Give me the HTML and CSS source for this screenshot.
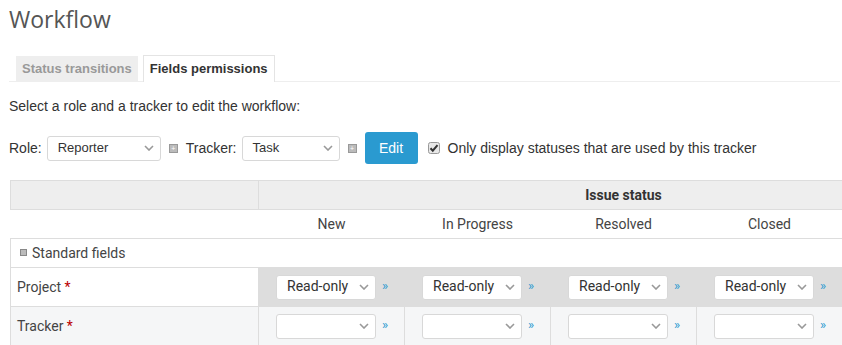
FILE: index.html
```html
<!DOCTYPE html>
<html>
<head>
<meta charset="utf-8">
<link rel="stylesheet" href="styles.css">
</head>
<body>
<div class="page">
  <h2 class="title">Workflow</h2>
  <div class="tabs">
    <a class="tab">Status transitions</a>
    <a class="tab active">Fields permissions</a>
  </div>
  <p class="intro">Select a role and a tracker to edit the workflow:</p>
  <div class="filters">
    <label class="lbl">Role:</label>
    <div class="select sel-role"><span>Reporter</span><svg class="chev" viewBox="0 0 10 6"><path d="M1 1l4 4 4-4" fill="none" stroke="#999" stroke-width="1.6"/></svg></div>
    <span class="plus">+</span>
    <label class="lbl">Tracker:</label>
    <div class="select sel-tracker"><span>Task</span><svg class="chev" viewBox="0 0 10 6"><path d="M1 1l4 4 4-4" fill="none" stroke="#999" stroke-width="1.6"/></svg></div>
    <span class="plus">+</span>
    <button class="btn">Edit</button>
    <span class="check"><svg viewBox="0 0 12 12"><rect x="0.5" y="0.5" width="11" height="11" rx="2" fill="#e8e8e8" stroke="#999"/><path d="M2.5 6.2l2.3 2.5 4.7-5.5" fill="none" stroke="#333" stroke-width="2"/></svg></span>
    <span class="checklabel">Only display statuses that are used by this tracker</span>
  </div>
  <div class="tablewrap">
    <table class="wf">
      <colgroup>
        <col class="c-first"><col class="c-st"><col class="c-st"><col class="c-st"><col class="c-st"><col class="c-st">
      </colgroup>
      <tr class="r-group">
        <th></th>
        <th colspan="5" class="group">Issue status</th>
      </tr>
      <tr class="r-names">
        <td></td>
        <td>New</td><td>In Progress</td><td>Resolved</td><td>Closed</td><td>Rejected</td>
      </tr>
      <tr class="r-section">
        <td colspan="6"><span class="minus"></span>Standard fields</td>
      </tr>
      <tr class="r-field r-dark">
        <td class="fname">Project <span class="req">*</span></td>
        <td><div class="cell"><div class="select small"><span>Read-only</span><svg class="chev" viewBox="0 0 10 6"><path d="M1 1l4 4 4-4" fill="none" stroke="#999" stroke-width="1.6"/></svg></div><span class="raq">»</span></div></td>
        <td><div class="cell"><div class="select small"><span>Read-only</span><svg class="chev" viewBox="0 0 10 6"><path d="M1 1l4 4 4-4" fill="none" stroke="#999" stroke-width="1.6"/></svg></div><span class="raq">»</span></div></td>
        <td><div class="cell"><div class="select small"><span>Read-only</span><svg class="chev" viewBox="0 0 10 6"><path d="M1 1l4 4 4-4" fill="none" stroke="#999" stroke-width="1.6"/></svg></div><span class="raq">»</span></div></td>
        <td><div class="cell"><div class="select small"><span>Read-only</span><svg class="chev" viewBox="0 0 10 6"><path d="M1 1l4 4 4-4" fill="none" stroke="#999" stroke-width="1.6"/></svg></div><span class="raq">»</span></div></td>
        <td><div class="cell"><div class="select small"><span>Read-only</span><svg class="chev" viewBox="0 0 10 6"><path d="M1 1l4 4 4-4" fill="none" stroke="#999" stroke-width="1.6"/></svg></div><span class="raq">»</span></div></td>
      </tr>
      <tr class="r-field r-light">
        <td class="fname">Tracker <span class="req">*</span></td>
        <td><div class="cell"><div class="select small"><span></span><svg class="chev" viewBox="0 0 10 6"><path d="M1 1l4 4 4-4" fill="none" stroke="#999" stroke-width="1.6"/></svg></div><span class="raq">»</span></div></td>
        <td><div class="cell"><div class="select small"><span></span><svg class="chev" viewBox="0 0 10 6"><path d="M1 1l4 4 4-4" fill="none" stroke="#999" stroke-width="1.6"/></svg></div><span class="raq">»</span></div></td>
        <td><div class="cell"><div class="select small"><span></span><svg class="chev" viewBox="0 0 10 6"><path d="M1 1l4 4 4-4" fill="none" stroke="#999" stroke-width="1.6"/></svg></div><span class="raq">»</span></div></td>
        <td><div class="cell"><div class="select small"><span></span><svg class="chev" viewBox="0 0 10 6"><path d="M1 1l4 4 4-4" fill="none" stroke="#999" stroke-width="1.6"/></svg></div><span class="raq">»</span></div></td>
        <td><div class="cell"><div class="select small"><span></span><svg class="chev" viewBox="0 0 10 6"><path d="M1 1l4 4 4-4" fill="none" stroke="#999" stroke-width="1.6"/></svg></div><span class="raq">»</span></div></td>
      </tr>
    </table>
  </div>
</div>
</body>
</html>
```
FILE: styles.css
```css
html, body {
  margin: 0;
  padding: 0;
  background: #fff;
  overflow: hidden;
}
body {
  font-family: "Liberation Sans", Arial, sans-serif;
  font-size: 14px;
  color: #333;
}
.page {
  padding: 0 0 0 9px;
  width: 1100px;
}
.title {
  margin: 0;
  padding-top: 4px;
  height: 50px;
  box-sizing: border-box;
  font-family: "Open Sans", sans-serif;
  font-weight: 400;
  font-size: 23px;
  line-height: 30px;
  color: #555;
}
.tabs {
  display: flex;
  gap: 5px;
  padding-left: 7px;
  border-bottom: 1px solid #eee;
  height: 31px;
  align-items: flex-end;
  width: 824px;
}
.tab {
  display: block;
  height: 25px;
  line-height: 26px;
  padding: 0 6px;
  font-weight: bold;
  font-size: 13px;
  color: #999;
  background: #eee;
  box-sizing: border-box;
}
.tab.active {
  background: #fff;
  color: #333;
  border: 1px solid #e4e4e4;
  border-bottom: none;
  height: 27px;
  margin-bottom: -1px;
  line-height: 26px;
}
.intro {
  margin: 0;
  padding-top: 17px;
  height: 50px;
  box-sizing: border-box;
  line-height: 15px;
  font-size: 14px;
}
.filters {
  display: flex;
  align-items: center;
  height: 32px;
  font-size: 14px;
}
.lbl {
  color: #333;
  margin-right: 5px;
}
.select {
  display: flex;
  align-items: center;
  justify-content: space-between;
  height: 25px;
  border: 1px solid #d8d8d8;
  border-radius: 3px;
  background: #fff;
  box-sizing: border-box;
  padding: 0 6px 0 10px;
  font-size: 13px;
  color: #333;
}
.select span {
  padding-bottom: 2px;
}
.chev {
  width: 10px;
  height: 6px;
}
.sel-role { width: 114px; }
.sel-tracker { width: 98px; }
.plus {
  display: inline-block;
  width: 7px;
  height: 7px;
  background: #bbb;
  border: 1px solid #999;
  color: #fff;
  font-size: 7px;
  line-height: 7px;
  text-align: center;
  margin: 0 8px 0 8px;
  overflow: hidden;
}
.btn {
  width: 53px;
  height: 32px;
  border: none;
  border-radius: 3px;
  background: #2a9ad0;
  color: #fff;
  font-family: "Liberation Sans", Arial, sans-serif;
  font-size: 14px;
  padding: 0;
  margin-left: 0;
  margin-right: 10px;
}
.check svg {
  display: block;
  width: 12px;
  height: 12px;
}
.checklabel {
  margin-left: 8px;
  font-size: 14px;
}
.tablewrap {
  margin-top: 16px;
  padding-left: 1px;
}
.wf {
  border-collapse: collapse;
  table-layout: fixed;
  width: 978px;
  font-family: Roboto, sans-serif;
  font-size: 14px;
  color: #444;
}
.c-first { width: 248px; }
.c-st { width: 146px; }
.wf td, .wf th {
  border: 1px solid #ddd;
  padding: 0;
}
.r-group th {
  background: #eee;
  height: 28px;
  font-weight: bold;
  color: #333;
  font-size: 14px;
}
.r-names td {
  height: 28px;
  text-align: center;
  font-size: 14px;
  color: #444;
  border-left: none;
  border-right: none;
}
.r-section td {
  height: 28px;
  padding-left: 9px;
  font-size: 14px;
}
.minus {
  display: inline-block;
  width: 5px;
  height: 5px;
  background: #bbb;
  border: 1px solid #888;
  margin-right: 5px;
  vertical-align: 2px;
}
.r-field td {
  height: 38px;
}
.r-dark td { background: #ddd; }
.r-dark td.fname { background: #fff; }
.r-light td { background: #f5f6f7; }
.fname {
  padding-left: 6px !important;
  font-size: 14px;
}
.req { color: #bb0000; }
.cell {
  display: flex;
  align-items: center;
  padding-left: 17px;
}
.select.small {
  width: 100px;
  height: 25px;
  padding: 0 6px 0 10px;
  font-family: Roboto, sans-serif;
  font-size: 14px;
}
.raq {
  color: #2a9ad0;
  margin-left: 6px;
  font-size: 13px;
  margin-top: -3px;
}
```
